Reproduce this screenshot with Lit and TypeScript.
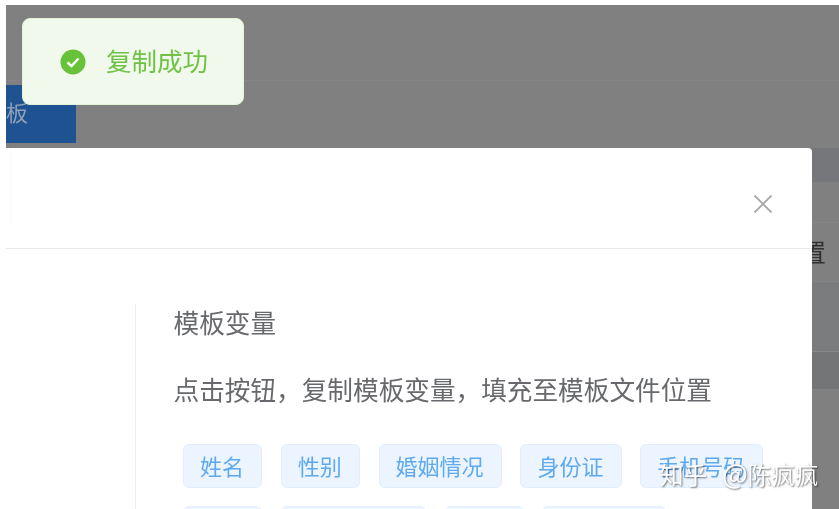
import { LitElement, html, css, svg } from "lit";
import { customElement } from "lit/decorators.js";

const ROW1 = ["姓名", "性别", "婚姻情况", "身份证", "手机号码"];
const ROW2 = ["学历", "现居住地址", "民族", "工作单位"];

@customElement("app-root")
export class AppRoot extends LitElement {
  static styles = css`
    :host {
      display: block;
      width: 839px;
      height: 509px;
      overflow: hidden;
      background: #fff;
      font-family: "Noto Sans CJK SC", "Liberation Sans", sans-serif;
    }
    .stage { position: relative; width: 839px; height: 509px; overflow: hidden; background: #fff; filter: blur(0.4px); }
    .backdrop {
      position: absolute;
      inset: 5px 0 0 6px;
      background: #808080;
      display: flex;
      flex-direction: column;
    }
    .row { box-sizing: border-box; border-bottom: 1px solid #858585; flex: none; display: flex; align-items: center; }
    .r0 { height: 76px; }
    .r1 { height: 62px; border: 0; align-items: flex-end; }
    .r2 { height: 5px; border: 0; }
    .r3 { height: 35px; background: #76777a; border-bottom-color: #808080; }
    .r4 { height: 40px; }
    .r5 { height: 59px; justify-content: flex-end; padding: 0 13px 2px 0; color: #303030; font-size: 25px; }
    .r6 { height: 70px; background: #7b7c7e; border-bottom-color: #888; }
    .r7 { height: 38px; background: #747577; border-bottom-color: #828282; }
    .tplbtn {
      width: 70px; height: 58px; background: #1e5290; color: #8ea1b9; font-size: 22px;
      display: flex; align-items: center; justify-content: flex-end; padding: 0 48px 6px 0;
      box-sizing: border-box; overflow: hidden; white-space: nowrap;
    }
    .toast {
      position: absolute; left: 22px; top: 18px; width: 222px; height: 87px; box-sizing: border-box;
      background: #f0f9eb; border: 1px solid #e1f3d8; border-radius: 8px;
      display: flex; align-items: center; gap: 20px; padding-left: 37px; color: #6fc245; font-size: 25.5px; line-height: 1;
    }
    .toast span { padding-bottom: 4px; }
    .toast svg { width: 26px; height: 26px; flex: none; }
    .modal {
      position: absolute; left: 6px; top: 148px; width: 806px; height: 361px; background: #fff;
      border-radius: 0 4px 0 0; display: flex; flex-direction: column; overflow: hidden;
    }
    .head { height: 101px; box-sizing: border-box; border-bottom: 1px solid #e8e9ec; flex: none; display: flex; align-items: flex-start; justify-content: space-between; padding: 0 39px 0 0; }
    .head svg { width: 20px; height: 20px; display: block; margin-top: 46px; }
    .ghost { width: 5px; height: 77px; border-right: 1px solid #fafafa; border-bottom: 1px solid #fbfbfb; box-sizing: border-box; }
    .body { flex: 1; display: flex; padding-top: 55px; min-height: 0; }
    .side { width: 130px; flex: none; border-right: 1.5px solid #edeef2; box-sizing: border-box; }
    .main { padding-left: 37.5px; min-width: 0; flex: 1; color: #67696c; margin-top: -1px; }
    .title { font-size: 25.65px; line-height: 38px; white-space: nowrap; }
    .desc { font-size: 25.65px; line-height: 38px; margin-top: 29px; white-space: nowrap; }
    .tags { display: flex; flex-wrap: wrap; gap: 18px 18.6px; margin: 36px 0 0 9.5px; width: 620px; }
    .tag {
      height: 44px; box-sizing: border-box; padding: 0 17.2px 3px 16px; background: #ecf5ff; border: 1px solid #e0effe; border-radius: 6px;
      color: #5fa9ee; font-size: 22px; display: flex; align-items: center; line-height: 1; white-space: nowrap;
    }
    .mark {
      position: absolute; left: 660px; top: 456px; color: #fff; font-size: 23.5px; line-height: 34px; white-space: nowrap; word-spacing: 10px;
      text-shadow: 1px 1px 2px rgba(0,0,0,.55);
    }
    .at { font-size: 27px; }
  `;

  render() {
    return html`
      <div class="stage">
        <div class="backdrop">
          <div class="row r0"></div>
          <div class="row r1"><div class="tplbtn">模板</div></div>
          <div class="row r2"></div>
          <div class="row r3"></div>
          <div class="row r4"></div>
          <div class="row r5">置</div>
          <div class="row r6"></div>
          <div class="row r7"></div>
        </div>
        <div class="modal">
          <div class="head">
            <div class="ghost"></div>
            <svg viewBox="0 0 20 20" fill="none" stroke="#a8a9ab" stroke-width="1.8">
              ${svg`<path d="M1.5 1.5 18.5 18.5M18.5 1.5 1.5 18.5"/>`}
            </svg>
          </div>
          <div class="body">
            <div class="side"></div>
            <div class="main">
              <div class="title">模板变量</div>
              <div class="desc">点击按钮，复制模板变量，填充至模板文件位置</div>
              <div class="tags">
                ${ROW1.map((t) => html`<span class="tag">${t}</span>`)}
                ${ROW2.map((t) => html`<span class="tag">${t}</span>`)}
              </div>
            </div>
          </div>
        </div>
        <div class="toast">
          <svg viewBox="0 0 26 26">
            <circle cx="13" cy="13" r="12.5" fill="#67c23a"></circle>
            <path d="M7.5 13.5 11.5 17 18.5 9.5" fill="none" stroke="#fff" stroke-width="2.4"></path>
          </svg>
          <span>复制成功</span>
        </div>
        <div class="mark">知乎 <span class="at">@</span>陈疯疯</div>
      </div>
    `;
  }
}
